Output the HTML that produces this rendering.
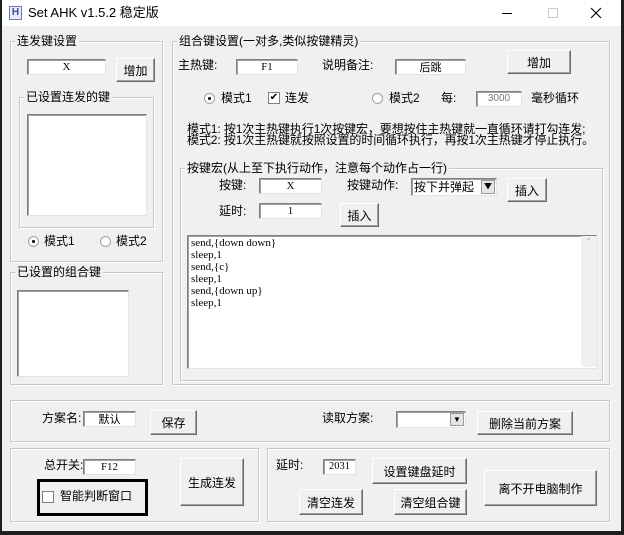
<!DOCTYPE html><html><head><meta charset="utf-8"><style>
*{margin:0;padding:0;box-sizing:border-box}
body{width:624px;height:535px;background:#1e1e1e;position:relative;overflow:hidden;font-family:"Liberation Sans","Noto Sans CJK SC",sans-serif;font-size:12px;color:#000}
.a{position:absolute}
.win{left:2px;top:0;width:619px;height:531px;background:#f0f0f0}
.tb{left:2px;top:0;width:619px;height:26px;background:#fff}
.g{position:absolute;border:1px solid #c8c8c8;box-shadow:inset 1px 1px 0 #fff,1px 1px 0 #fff}
.gl{position:absolute;background:#f0f0f0;padding:0 2px;line-height:14px;top:-8px;left:6px;white-space:nowrap}
.in{position:absolute;background:#fff;border-top:1px solid #808080;border-left:1px solid #808080;border-bottom:1px solid #e3e3e3;border-right:1px solid #e3e3e3;box-shadow:inset 1px 1px 0 #a0a0a0;text-align:center;line-height:14px;font-family:"Liberation Serif","Noto Serif CJK SC",serif;font-size:11px}
.bt{position:absolute;background:#f0f0f0;border:1px solid;border-color:#fff #696969 #696969 #fff;box-shadow:inset -1px -1px 0 #a0a0a0;display:flex;align-items:center;justify-content:center;white-space:nowrap}
.t{position:absolute;white-space:nowrap;line-height:14px}
.rd{position:absolute;width:11px;height:11px;border-radius:50%;background:#fff;border:1px solid #a0a0a0}
.rd.on::after{content:"";position:absolute;left:3px;top:3px;width:3px;height:3px;background:#000;border-radius:50%}
.cb{position:absolute;width:12px;height:12px;background:#fff;border:1px solid #808080}
</style></head><body>
<div class="a win"></div><div class="a tb"></div>
<div class="a" style="left:9px;top:6px;width:13px;height:14px;border:1px solid #6b7ab0;background:#e8ecf8;color:#3a4f9a;font-size:10px;line-height:12px;text-align:center;font-weight:bold">H</div>
<div class="t" style="left:28px;top:6px;font-size:13px">Set AHK v1.5.2 稳定版</div>
<div class="a" style="left:502px;top:13px;width:10px;height:1px;background:#000"></div>
<div class="a" style="left:548px;top:8px;width:10px;height:10px;border:1px solid #ccc"></div>
<svg class="a" style="left:590px;top:7px" width="12" height="12"><path d="M1 1L11 11M11 1L1 11" stroke="#000" stroke-width="1.1"/></svg>

<div class="g" style="left:10px;top:41px;width:153px;height:221px"><span class="gl" style="left:4px">连发键设置</span></div>
<div class="in" style="left:27px;top:59px;width:79px;height:16px">X</div>
<div class="bt" style="left:116px;top:58px;width:39px;height:24px">增加</div>
<div class="g" style="left:19px;top:97px;width:135px;height:131px"><span class="gl" style="left:4px">已设置连发的键</span></div>
<div class="in" style="left:27px;top:114px;width:120px;height:102px"></div>
<div class="rd on" style="left:28px;top:236px"></div><div class="t" style="left:44px;top:234px">模式1</div>
<div class="rd" style="left:100px;top:236px"></div><div class="t" style="left:116px;top:234px">模式2</div>
<div class="g" style="left:10px;top:272px;width:153px;height:113px"><span class="gl" style="left:4px">已设置的组合键</span></div>
<div class="in" style="left:17px;top:290px;width:112px;height:87px"></div>

<div class="g" style="left:172px;top:41px;width:438px;height:344px"><span class="gl" style="left:4px">组合键设置(一对多,类似按键精灵)</span></div>
<div class="t" style="left:178px;top:58px">主热键:</div>
<div class="in" style="left:236px;top:59px;width:62px;height:16px">F1</div>
<div class="t" style="left:322px;top:58px">说明备注:</div>
<div class="in" style="left:395px;top:59px;width:71px;height:16px;font-family:'Noto Sans CJK SC',sans-serif">后跳</div>
<div class="bt" style="left:507px;top:50px;width:64px;height:24px">增加</div>
<div class="rd on" style="left:204px;top:93px"></div><div class="t" style="left:221px;top:91px">模式1</div>
<div class="cb" style="left:268px;top:92px;font-size:10px;line-height:10px;text-align:center">✔</div><div class="t" style="left:285px;top:91px">连发</div>
<div class="rd" style="left:372px;top:93px"></div><div class="t" style="left:389px;top:91px">模式2</div>
<div class="t" style="left:441px;top:91px">每:</div>
<div class="in" style="left:476px;top:91px;width:46px;height:16px;color:#777;font-family:'Liberation Sans';font-size:10px">3000</div>
<div class="t" style="left:531px;top:91px">毫秒循环</div>
<div class="t" style="left:187px;top:124px;line-height:11px;font-size:12px;letter-spacing:-0.1px">模式1: 按1次主热键执行1次按键宏，要想按住主热键就一直循环请打勾连发;<br>模式2: 按1次主热键就按照设置的时间循环执行，再按1次主热键才停止执行。</div>
<div class="g" style="left:180px;top:168px;width:423px;height:213px"><span class="gl" style="left:4px">按键宏(从上至下执行动作，注意每个动作占一行)</span></div>
<div class="t" style="left:219px;top:178px">按键:</div>
<div class="in" style="left:259px;top:178px;width:63px;height:16px">X</div>
<div class="t" style="left:347px;top:178px">按键动作:</div>
<div class="in" style="left:411px;top:178px;width:86px;height:18px;text-align:left;padding-left:2px;font-family:'Noto Sans CJK SC';font-size:12px;line-height:16px">按下并弹起<span style="position:absolute;right:1px;top:1px;width:14px;height:14px;background:#e5e5e5;border:1px solid #999;font-size:8px;line-height:12px;text-align:center">▼</span></div>
<div class="bt" style="left:507px;top:178px;width:40px;height:24px">插入</div>
<div class="t" style="left:219px;top:204px">延时:</div>
<div class="in" style="left:259px;top:203px;width:63px;height:16px">1</div>
<div class="bt" style="left:340px;top:203px;width:39px;height:24px">插入</div>
<div class="in" style="left:187px;top:235px;width:410px;height:134px;text-align:left;padding:1px 3px;line-height:12px;font-size:11px">send,{down down}<br>sleep,1<br>send,{c}<br>sleep,1<br>send,{down up}<br>sleep,1
<span style="position:absolute;right:0;top:0;width:15px;height:131px;background:#f0f0f0;color:#aaa;font-size:8px;text-align:center">⌃</span></div>

<div class="g" style="left:10px;top:400px;width:600px;height:42px"></div>
<div class="t" style="left:42px;top:411px">方案名:</div>
<div class="in" style="left:83px;top:411px;width:53px;height:16px;font-family:'Noto Sans CJK SC'">默认</div>
<div class="bt" style="left:150px;top:410px;width:47px;height:25px">保存</div>
<div class="t" style="left:322px;top:411px">读取方案:</div>
<div class="in" style="left:396px;top:411px;width:70px;height:17px"><span style="position:absolute;right:1px;top:1px;width:14px;height:13px;background:#e5e5e5;border:1px solid #999;font-size:8px;line-height:11px">▼</span></div>
<div class="bt" style="left:477px;top:411px;width:96px;height:24px">删除当前方案</div>

<div class="g" style="left:10px;top:448px;width:249px;height:74px"></div>
<div class="t" style="left:44px;top:458px">总开关:</div>
<div class="in" style="left:83px;top:459px;width:53px;height:16px">F12</div>
<div class="bt" style="left:180px;top:458px;width:64px;height:48px">生成连发</div>
<div class="a" style="left:37px;top:479px;width:111px;height:37px;border:3px solid #000"></div>
<div class="cb" style="left:42px;top:491px"></div><div class="t" style="left:60px;top:489px">智能判断窗口</div>
<div class="g" style="left:267px;top:448px;width:343px;height:74px"></div>
<div class="t" style="left:276px;top:458px">延时:</div>
<div class="in" style="left:323px;top:459px;width:33px;height:16px;font-size:10.5px">2031</div>
<div class="bt" style="left:372px;top:458px;width:95px;height:26px">设置键盘延时</div>
<div class="bt" style="left:299px;top:489px;width:64px;height:26px">清空连发</div>
<div class="bt" style="left:394px;top:489px;width:73px;height:26px">清空组合键</div>
<div class="bt" style="left:484px;top:470px;width:113px;height:36px">离不开电脑制作</div>
</body></html>
